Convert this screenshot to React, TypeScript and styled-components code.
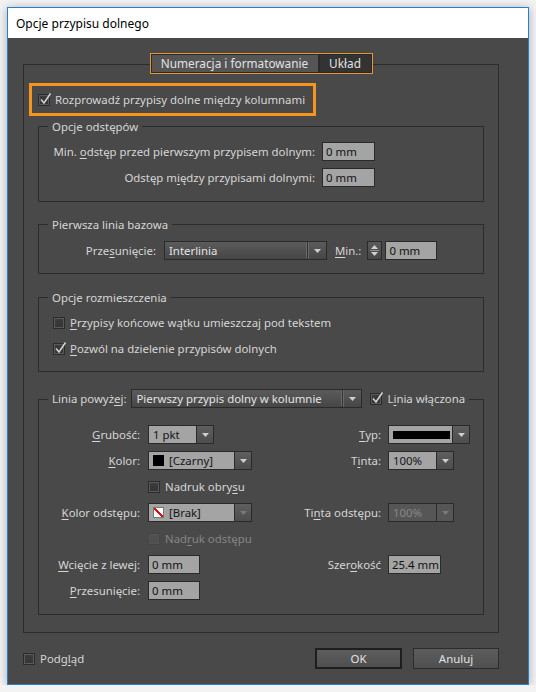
import React from 'react';
import styled, { createGlobalStyle } from 'styled-components';

const GlobalStyle = createGlobalStyle`
  html, body {
    margin: 0;
    padding: 0;
    background: #f3f3f3;
  }
  body {
    font-family: 'Noto Sans', 'Open Sans', sans-serif;
    font-size: 11.4px;
  }
  * {
    box-sizing: border-box;
  }
`;

const BG = '#494949';
const LINE = '#2c2c2c';

const Page = styled.div`
  padding: 7px 0 0 7px;
`;

const Window = styled.div`
  width: 522px;
  border: 1px solid #1f80d6;
  box-shadow: 0 1px 9px rgba(0, 0, 0, 0.3);
  display: flex;
  flex-direction: column;
`;

const TitleBar = styled.div`
  height: 30px;
  background: #fff;
  color: #000;
  padding-left: 8px;
  display: flex;
  align-items: center;
  font-size: 12px;
`;

const Body = styled.div`
  background: ${BG};
  color: #d6d6d6;
  padding: 26px 29px 15px 15px;
  display: flex;
  flex-direction: column;
  line-height: 16px;
`;

const Frame = styled.div`
  border: 1px solid ${LINE};
  padding: 0 14px 17px;
  display: flex;
  flex-direction: column;
`;

const TabStrip = styled.div`
  align-self: center;
  margin-top: -12px;
  display: flex;
  border: 1px solid #e8952f;
  background: ${BG};
`;

const Tab = styled.div<{ $w: number; $active?: boolean }>`
  width: ${(p) => p.$w}px;
  height: 19px;
  line-height: 17px;
  font-size: 11.8px;
  text-align: center;
  border: 1px solid #2a2a2a;
  background: ${(p) => (p.$active ? '#333333' : '#555555')};
  color: #e2e2e2;
`;

const Highlight = styled.div`
  align-self: flex-start;
  margin: 9px 0 0 -9px;
  width: 287px;
  height: 33px;
  border: 3px solid #f7941d;
  padding-left: 6px;
  display: flex;
  align-items: center;
  gap: 5px;
  white-space: nowrap;
`;

const Key = styled.span`
  text-decoration: underline;
  text-underline-offset: 2px;
`;

const Group = styled.section<{ $mt: number; $pb: number }>`
  margin-top: ${(p) => p.$mt}px;
  padding-bottom: ${(p) => p.$pb}px;
  border: 1px solid ${LINE};
  display: flex;
  flex-direction: column;
`;

const Legend = styled.div<{ $tall?: boolean }>`
  align-self: flex-start;
  margin: ${(p) => (p.$tall ? '-11px 0 0 9px' : '-8px 0 0 9px')};
  padding: 0 4px;
  height: ${(p) => (p.$tall ? 19 : 16)}px;
  background: ${BG};
  display: flex;
  align-items: center;
  white-space: nowrap;
`;

const FormGrid = styled.div<{ $cols: string; $mt: number }>`
  display: grid;
  grid-template-columns: ${(p) => p.$cols};
  grid-auto-rows: 19px;
  row-gap: 7px;
  margin-top: ${(p) => p.$mt}px;
  align-items: center;
`;

const Label = styled.span<{ $pr?: number; $dim?: boolean; $col?: number }>`
  grid-column: ${(p) => p.$col ?? 'auto'};
  justify-self: end;
  padding-right: ${(p) => p.$pr ?? 8}px;
  white-space: nowrap;
  color: ${(p) => (p.$dim ? '#8a8a8a' : 'inherit')};
`;

const Cell = styled.div<{ $col?: number }>`
  grid-column: ${(p) => p.$col ?? 'auto'};
  display: flex;
  align-items: center;
  gap: 5px;
  white-space: nowrap;
`;

const Row = styled.div<{ $mt: number }>`
  display: flex;
  align-items: center;
  height: 19px;
  margin-top: ${(p) => p.$mt}px;
`;

const FixedLabel = styled.span<{ $w: number }>`
  width: ${(p) => p.$w}px;
  text-align: right;
  padding-right: 8px;
  white-space: nowrap;
`;

const InlineLabel = styled.span<{ $ml?: number }>`
  margin-left: ${(p) => p.$ml ?? 0}px;
  white-space: nowrap;
`;

const CheckList = styled.div`
  margin-top: 7px;
  padding-left: 14px;
  display: flex;
  flex-direction: column;
  gap: 7px;
`;

const CheckRow = styled.div<{ $dim?: boolean }>`
  height: 19px;
  display: flex;
  align-items: center;
  gap: 5px;
  color: ${(p) => (p.$dim ? '#858585' : 'inherit')};
  white-space: nowrap;
`;

const BoxShape = styled.span<{ $dim?: boolean }>`
  position: relative;
  flex: none;
  width: 12px;
  height: 12px;
  border: 1px solid ${(p) => (p.$dim ? '#444' : '#2b2b2b')};
  background: ${(p) => (p.$dim ? '#4f4f4f' : 'linear-gradient(#3c3c3c, #343434)')};
  box-shadow: ${(p) => (p.$dim ? 'inset 0 0 0 1px #555' : 'inset 0 0 0 1px #5a5a5a')};
`;

const Tick = styled.svg`
  position: absolute;
  left: 0px;
  top: -3px;
  width: 13px;
  height: 13px;
  overflow: visible;
`;

const Checkbox: React.FC<{ checked?: boolean; dim?: boolean }> = ({ checked, dim }) => (
  <BoxShape $dim={dim}>
    {checked && (
      <Tick viewBox="0 0 13 13">
        <path d="M2 7.5 L5 11 L11.5 1.5" fill="none" stroke="#d2d2d2" strokeWidth="1.6" />
      </Tick>
    )}
  </BoxShape>
);

const SelectShell = styled.div<{ $w: number; $dark?: boolean; $dim?: boolean }>`
  width: ${(p) => p.$w}px;
  height: 19px;
  flex: none;
  display: flex;
  border: 1px solid #2a2a2a;
  background: ${(p) =>
    p.$dark ? 'linear-gradient(#5b5b5b, #464646)' : p.$dim ? '#565656' : '#a4a4a4'};
  color: ${(p) => (p.$dark ? '#e4e4e4' : p.$dim ? '#888' : '#151515')};
`;

const SelectValue = styled.div`
  flex: 1;
  min-width: 0;
  padding-left: 4px;
  display: flex;
  align-items: center;
  gap: 5px;
  white-space: nowrap;
  overflow: hidden;
`;

const ArrowPart = styled.div<{ $dark?: boolean; $dim?: boolean }>`
  width: ${(p) => (p.$dark ? 19 : 17)}px;
  flex: none;
  display: flex;
  align-items: center;
  justify-content: center;
  border-left: 1px solid ${(p) => (p.$dark ? '#333' : '#2a2a2a')};
  background: ${(p) => (p.$dark ? 'transparent' : p.$dim ? '#565656' : 'linear-gradient(#5e5e5e, #4d4d4d)')};
  box-shadow: ${(p) => (p.$dark ? 'inset 2px 0 0 -1px #6a6a6a, -2px 0 0 -1px #6a6a6a' : 'none')};
`;

const Caret: React.FC<{ color?: string; up?: boolean }> = ({ color = '#cfcfcf', up }) => (
  <svg width="7" height="4" viewBox="0 0 7 4">
    <path d={up ? 'M0 4 H7 L3.5 0 Z' : 'M0 0 H7 L3.5 4 Z'} fill={color} />
  </svg>
);

const Select: React.FC<{
  w: number;
  dark?: boolean;
  dim?: boolean;
  arrowDim?: boolean;
  children?: React.ReactNode;
}> = ({ w, dark, dim, arrowDim, children }) => (
  <SelectShell $w={w} $dark={dark} $dim={dim}>
    <SelectValue>{children}</SelectValue>
    <ArrowPart $dark={dark} $dim={dim}>
      <Caret color={dim || arrowDim ? '#7a7a7a' : '#cfcfcf'} />
    </ArrowPart>
  </SelectShell>
);

const Swatch = styled.span<{ $none?: boolean }>`
  flex: none;
  width: 11px;
  height: 11px;
  background: ${(p) =>
    p.$none
      ? 'linear-gradient(to top right, #fff 0 44%, #e01010 44% 56%, #fff 56% 100%)'
      : '#000'};
  border: 1px solid ${(p) => (p.$none ? '#777' : '#000')};
`;

const StrokeSample = styled.span`
  width: 57px;
  height: 8px;
  background: #000;
`;

const Field = styled.div<{ $w: number }>`
  width: ${(p) => p.$w}px;
  height: 19px;
  flex: none;
  border: 1px solid #2a2a2a;
  background: #a4a4a4;
  color: #121212;
  padding-left: 3px;
  line-height: 17px;
  white-space: nowrap;
`;

const Spinner = styled.div`
  width: 15px;
  height: 19px;
  margin: 0 3px 0 6px;
  border: 1px solid #2a2a2a;
  background: linear-gradient(#5a5a5a, #474747);
  display: flex;
  flex-direction: column;
  align-items: center;
  justify-content: space-evenly;
  position: relative;
  &::after {
    content: '';
    position: absolute;
    left: 2px;
    right: 2px;
    top: 8px;
    height: 1px;
    background: #8a8a8a;
  }
`;

const Footer = styled.div`
  margin-top: 15px;
  height: 21px;
  display: flex;
  align-items: center;
  gap: 5px;
`;

const Spacer = styled.div`
  flex: 1;
`;

const Button = styled.div<{ $w: number; $default?: boolean }>`
  width: ${(p) => p.$w}px;
  height: 21px;
  margin-left: ${(p) => (p.$default ? 0 : 6)}px;
  border: ${(p) => (p.$default ? '2px solid #1e1e1e' : '1px solid #2c2c2c')};
  background: linear-gradient(#5d5d5d, #4f4f4f);
  color: #e2e2e2;
  display: flex;
  align-items: center;
  justify-content: center;
`;

export default function App() {
  return (
    <>
      <GlobalStyle />
      <Page>
        <Window>
          <TitleBar>Opcje przypisu dolnego</TitleBar>
          <Body>
            <Frame>
              <TabStrip>
                <Tab $w={168}>Numeracja i formatowanie</Tab>
                <Tab $w={53} $active>
                  Układ
                </Tab>
              </TabStrip>

              <Highlight>
                <Checkbox checked />
                <span>Rozprowadź przypisy dolne między kolumnami</span>
              </Highlight>

              <Group $mt={10} $pb={14}>
                <Legend>Opcje odstępów</Legend>
                <FormGrid $cols="283px auto" $mt={7}>
                  <Label $pr={7}>
                    Min. <Key>o</Key>dstęp przed pierwszym przypisem dolnym:
                  </Label>
                  <Field $w={53}>0 mm</Field>
                  <Label $pr={7}>
                    Odstęp m<Key>i</Key>ędzy przypisami dolnymi:
                  </Label>
                  <Field $w={53}>0 mm</Field>
                </FormGrid>
              </Group>

              <Group $mt={22} $pb={13}>
                <Legend>Pierwsza linia bazowa</Legend>
                <Row $mt={8}>
                  <FixedLabel $w={125}>
                    Prze<Key>s</Key>unięcie:
                  </FixedLabel>
                  <Select w={163} dark>
                    Interlinia
                  </Select>
                  <InlineLabel $ml={8}>
                    <Key>M</Key>in.:
                  </InlineLabel>
                  <Spinner>
                    <Caret up />
                    <Caret />
                  </Spinner>
                  <Field $w={52}>0 mm</Field>
                </Row>
              </Group>

              <Group $mt={23} $pb={13}>
                <Legend>Opcje rozmieszczenia</Legend>
                <CheckList>
                  <CheckRow>
                    <Checkbox />
                    <span>
                      <Key>P</Key>rzypisy końcowe wątku umieszczaj pod tekstem
                    </span>
                  </CheckRow>
                  <CheckRow>
                    <Checkbox checked />
                    <span>
                      <Key>P</Key>ozwól na dzielenie przypisów dolnych
                    </span>
                  </CheckRow>
                </CheckList>
              </Group>

              <Group $mt={27} $pb={14}>
                <Legend $tall>
                  <InlineLabel>
                    Linia powyż<Key>e</Key>j:
                  </InlineLabel>
                  <InlineLabel $ml={5} />
                  <Select w={231} dark>
                    Pierwszy przypis dolny w kolumnie
                  </Select>
                  <InlineLabel $ml={8} />
                  <Checkbox checked />
                  <InlineLabel $ml={5}>
                    L<Key>i</Key>nia włączona
                  </InlineLabel>
                </Legend>
                <FormGrid $cols="109px 150px 90px 1fr" $mt={17}>
                  <Label>
                    <Key>G</Key>rubość:
                  </Label>
                  <Cell>
                    <Select w={66}>1 pkt</Select>
                  </Cell>
                  <Label $pr={7}>
                    <Key>T</Key>yp:
                  </Label>
                  <Cell>
                    <Select w={82}>
                      <StrokeSample />
                    </Select>
                  </Cell>

                  <Label>
                    <Key>K</Key>olor:
                  </Label>
                  <Cell>
                    <Select w={104}>
                      <Swatch />
                      [Czarny]
                    </Select>
                  </Cell>
                  <Label $pr={7}>
                    T<Key>i</Key>nta:
                  </Label>
                  <Cell>
                    <Select w={66}>100%</Select>
                  </Cell>

                  <Cell $col={2}>
                    <CheckRow>
                      <Checkbox />
                      <span>
                        Nadruk obry<Key>s</Key>u
                      </span>
                    </CheckRow>
                  </Cell>

                  <Label $col={1}>
                    <Key>K</Key>olor odstępu:
                  </Label>
                  <Cell>
                    <Select w={104} arrowDim>
                      <Swatch $none />
                      [Brak]
                    </Select>
                  </Cell>
                  <Label $pr={7}>
                    Ti<Key>n</Key>ta odstępu:
                  </Label>
                  <Cell>
                    <Select w={66} dim>
                      100%
                    </Select>
                  </Cell>

                  <Cell $col={2}>
                    <CheckRow $dim>
                      <Checkbox dim />
                      <span>
                        Nad<Key>r</Key>uk odstępu
                      </span>
                    </CheckRow>
                  </Cell>

                  <Label $col={1}>
                    <Key>W</Key>cięcie z lewej:
                  </Label>
                  <Cell>
                    <Field $w={52}>0 mm</Field>
                  </Cell>
                  <Label $pr={7}>
                    Szer<Key>o</Key>kość
                  </Label>
                  <Cell>
                    <Field $w={53}>25.4 mm</Field>
                  </Cell>

                  <Label>
                    <Key>P</Key>rzesunięcie:
                  </Label>
                  <Cell>
                    <Field $w={52}>0 mm</Field>
                  </Cell>
                </FormGrid>
              </Group>
            </Frame>

            <Footer>
              <Checkbox />
              <InlineLabel>
                Podg<Key>l</Key>ąd
              </InlineLabel>
              <Spacer />
              <Button $w={87} $default>
                OK
              </Button>
              <Button $w={86}>Anuluj</Button>
            </Footer>
          </Body>
        </Window>
      </Page>
    </>
  );
}
